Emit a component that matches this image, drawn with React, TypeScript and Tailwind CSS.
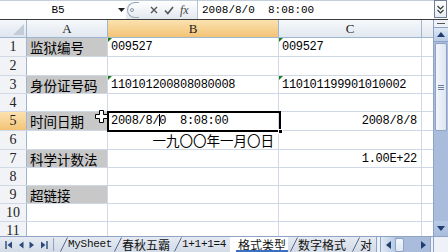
import React from "react";

const CJK = '"Noto Sans CJK SC", sans-serif';
const MONO = '"Liberation Mono", monospace';
const SERIF = '"Liberation Serif", serif';

type Row = {
  h: number;
  a?: string;
  b?: string;
  c?: string;
  bTri?: boolean;
  cTri?: boolean;
  bRight?: boolean;
  cRight?: boolean;
  bCjk?: boolean;
  caret?: boolean;
};

const rows: Row[] = [
  { h: 19, a: "监狱编号", b: "009527", bTri: true, c: "009527", cTri: true },
  { h: 19 },
  { h: 18, a: "身份证号码", b: "110101200808080008", bTri: true, c: "110101199901010002", cTri: true },
  { h: 18 },
  { h: 19, a: "时间日期", b: "2008/8/0  8:08:00", caret: true, c: "2008/8/8", cRight: true },
  { h: 19, b: "一九〇〇年一月〇日", bRight: true, bCjk: true },
  { h: 18, a: "科学计数法", c: "1.00E+22", cRight: true },
  { h: 18 },
  { h: 18, a: "超链接" },
  { h: 18 },
  { h: 14 },
];

function Tri() {
  return (
    <div className="absolute left-0 top-0 w-0 h-0 border-t-[4px] border-t-[#1e7a1e] border-r-[4px] border-r-transparent" />
  );
}

function Cell({
  w,
  text,
  tri,
  right,
  cjk,
  caret,
}: {
  w: number;
  text?: string;
  tri?: boolean;
  right?: boolean;
  cjk?: boolean;
  caret?: boolean;
}) {
  return (
    <div
      className={
        "relative h-full shrink-0 border-r border-[#d0d7e5] flex items-center whitespace-pre " +
        (right ? "justify-end pr-[4px] " : "pl-[3px] ")
      }
      style={{ width: w }}
    >
      {tri && <Tri />}
      {text && (
        <span
          className={cjk ? "text-[13.5px] text-black leading-[16px]" : "text-[12px] tracking-[-0.3px] text-black leading-[14px]"}
          style={{ fontFamily: cjk ? CJK : MONO }}
        >
          {caret ? (
            <>
              {"2008/8/"}
              <span className="inline-block w-px h-[12px] bg-black align-middle -mr-px relative -top-[1px]" />
              {"0  8:08:00"}
            </>
          ) : (
            text
          )}
        </span>
      )}
    </div>
  );
}

function ACell({ text }: { text?: string }) {
  return (
    <div
      className={
        "h-full w-[81px] shrink-0 border-r border-[#d0d7e5] flex items-center pl-[3px] whitespace-nowrap " +
        (text ? "bg-[#c8c8c8]" : "")
      }
    >
      {text && (
        <span className="text-[13.5px] leading-[16px] text-black" style={{ fontFamily: CJK }}>
          {text}
        </span>
      )}
    </div>
  );
}

export default function App() {
  return (
    <div className="w-[448px] h-[252px] overflow-hidden bg-white flex flex-col relative select-none">
      {/* Formula bar */}
      <div className="h-[20px] flex border-b border-[#3a3a3a] shrink-0 bg-white">
        <div className="w-[116px] h-full flex items-center justify-center border-t border-[#c5cedb]">
          <span className="text-[11px] text-black leading-none" style={{ fontFamily: MONO }}>
            B5
          </span>
        </div>
        <div className="w-[10px] h-full flex items-center justify-center border-t border-[#c5cedb]">
          <svg width="7" height="4" viewBox="0 0 7 4">
            <path d="M0 0 L7 0 L3.5 4 Z" fill="#222" />
          </svg>
        </div>
        <div className="w-[71px] h-full flex items-center bg-gradient-to-b from-[#ffffff] to-[#e3e8ef] border-t border-[#c5cedb]">
          <div className="ml-[1px] w-[12px] h-[16px] rounded-l-full border-l border-t border-b border-[#9aa8bb] flex items-center pl-[2px]">
            <div className="w-[4px] h-[4px] rounded-full border border-[#8a96a8]" />
          </div>
          <div className="ml-[10px] w-[9px] flex items-center justify-center">
            <svg width="8" height="8" viewBox="0 0 8 8">
              <path d="M1 1 L7 7 M7 1 L1 7" stroke="#555" strokeWidth="1.4" />
            </svg>
          </div>
          <div className="ml-[6px] w-[10px] flex items-center justify-center">
            <svg width="10" height="9" viewBox="0 0 10 9">
              <path d="M1 4.5 L3.8 7.5 L9 1" stroke="#555" strokeWidth="1.6" fill="none" />
            </svg>
          </div>
          <span
            className="ml-[6px] text-[12px] italic text-[#444] leading-none"
            style={{ fontFamily: SERIF }}
          >
            fx
          </span>
        </div>
        <div className="w-px h-full bg-[#b8c3d2]" />
        <div className="flex-1 h-full flex items-center pl-[4px] border-t border-[#c5cedb] whitespace-pre">
          <span className="text-[11px] text-black leading-none" style={{ fontFamily: MONO }}>
            {"2008/8/0  8:08:00"}
          </span>
        </div>
        <div className="w-[13px] h-[18px] mr-[1px] border border-[#6f7f96] bg-gradient-to-b from-white to-[#e5eaf2] flex items-center justify-center">
          <svg width="7" height="9" viewBox="0 0 7 9">
            <path d="M0.5 1 L3.5 4 L6.5 1 M0.5 5 L3.5 8 L6.5 5" stroke="#333" strokeWidth="1.1" fill="none" />
          </svg>
        </div>
      </div>

      {/* Sheet area */}
      <div className="flex h-[216px] shrink-0">
        <div className="w-[433px] h-full flex flex-col">
          {/* Column header */}
          <div className="h-[18px] flex shrink-0 border-b border-[#9eb6ce]">
            <div className="w-[27px] h-full border-r border-[#9eb6ce] bg-gradient-to-b from-[#f4f7fb] to-[#dfe6ef] relative">
              <div className="absolute right-[2px] bottom-[2px] w-0 h-0 border-b-[11px] border-b-[#c2ccd9] border-l-[11px] border-l-transparent" />
            </div>
            <div className="w-[81px] h-full border-r border-[#9eb6ce] bg-gradient-to-b from-[#f6f8fb] to-[#e2e8f0] flex items-center justify-center">
              <span className="text-[13px] leading-none text-[#222]" style={{ fontFamily: SERIF }}>A</span>
            </div>
            <div className="w-[171px] h-full border-r border-[#9eb6ce] bg-gradient-to-b from-[#fbe2b0] to-[#f3c375] flex items-center justify-center">
              <span className="text-[13px] leading-none text-[#222]" style={{ fontFamily: SERIF }}>B</span>
            </div>
            <div className="w-[143px] h-full border-r border-[#9eb6ce] bg-gradient-to-b from-[#f6f8fb] to-[#e2e8f0] flex items-center justify-center">
              <span className="text-[13px] leading-none text-[#222]" style={{ fontFamily: SERIF }}>C</span>
            </div>
            <div className="flex-1 h-full bg-gradient-to-b from-[#f6f8fb] to-[#e2e8f0]" />
          </div>

          {rows.map((r, i) => (
            <div
              key={i}
              className={"flex shrink-0 " + (i < 10 ? "border-b border-[#d0d7e5]" : "")}
              style={{ height: r.h }}
            >
              <div
                className={
                  "w-[27px] h-full shrink-0 border-r border-[#9eb6ce] flex justify-center " +
                  (i < 10 ? "items-center " : "items-start pt-[2px] ") +
                  (i === 4 ? "bg-gradient-to-b from-[#fbe2b0] to-[#f3c375]" : "bg-[#f1f3f6]")
                }
              >
                <span className="text-[14px] leading-[14px] text-[#222]" style={{ fontFamily: SERIF }}>
                  {String(i + 1)}
                </span>
              </div>
              <ACell text={r.a} />
              <Cell w={171} text={r.b} tri={r.bTri} right={r.bRight} cjk={r.bCjk} caret={r.caret} />
              <Cell w={143} text={r.c} tri={r.cTri} right={r.cRight} />
              <div className="flex-1 h-full" />
            </div>
          ))}
        </div>

        {/* Vertical scrollbar */}
        <div className="w-[15px] h-full flex flex-col bg-[#a9bcdb] border-l border-[#8fa3c4]">
          <div className="h-[8px] bg-[#eef2f8] border-b border-[#8fa3c4] flex items-center justify-center">
            <div className="w-[8px] h-px bg-[#555]" />
          </div>
          <div className="h-[14px] bg-gradient-to-b from-[#dfe8f5] to-[#b8cae6] border-b border-[#8fa3c4] flex items-center justify-center">
            <svg width="8" height="5" viewBox="0 0 8 5">
              <path d="M0 5 L4 0 L8 5 Z" fill="#1f3d6e" />
            </svg>
          </div>
          <div className="h-[88px] mx-[1px] mt-[1px] bg-gradient-to-r from-[#f3f6fb] to-[#dde6f3] border border-[#8fa3c4] rounded-[2px] flex items-center justify-center">
            <div className="flex flex-col gap-[1px]">
              <div className="w-[6px] h-px bg-[#6d7f9c]" />
              <div className="w-[6px] h-px bg-[#6d7f9c]" />
              <div className="w-[6px] h-px bg-[#6d7f9c]" />
            </div>
          </div>
          <div className="flex-1" />
          <div className="h-[15px] bg-gradient-to-b from-[#b8cae6] to-[#a9bcdb] flex items-center justify-center">
            <svg width="8" height="5" viewBox="0 0 8 5">
              <path d="M0 0 L8 0 L4 5 Z" fill="#1f3d6e" />
            </svg>
          </div>
        </div>
      </div>

      {/* Tab bar */}
      <div className="h-[16px] shrink-0 flex items-stretch bg-gradient-to-b from-[#e6ebf2] to-[#d3dbe7] border-t border-[#8fa3c4]">
        <div className="w-[53px] flex items-center justify-around px-[2px] text-[#2a4a7a]">
          <svg width="8" height="8" viewBox="0 0 8 8">
            <path d="M1 0 V8" stroke="#2a4a7a" strokeWidth="1.4" />
            <path d="M7 0.5 L2.5 4 L7 7.5 Z" fill="#2a4a7a" />
          </svg>
          <svg width="6" height="8" viewBox="0 0 6 8">
            <path d="M5.5 0.5 L1 4 L5.5 7.5 Z" fill="#2a4a7a" />
          </svg>
          <svg width="6" height="8" viewBox="0 0 6 8">
            <path d="M0.5 0.5 L5 4 L0.5 7.5 Z" fill="#2a4a7a" />
          </svg>
          <svg width="8" height="8" viewBox="0 0 8 8">
            <path d="M7 0 V8" stroke="#2a4a7a" strokeWidth="1.4" />
            <path d="M1 0.5 L5.5 4 L1 7.5 Z" fill="#2a4a7a" />
          </svg>
        </div>
        <div className="w-px bg-[#8fa3c4] my-[1px]" />
        <div className="flex-1 flex items-stretch overflow-hidden pl-[6px] whitespace-nowrap">
          <Tab label="MySheet" mono w={54} />
          <Tab label="春秋五霸" w={60} />
          <Tab label="1+1+1=4" mono w={56} />
          <Tab label="格式类型" w={60} active />
          <Tab label="数字格式" w={62} />
          <Tab label="对" w={20} />
        </div>
        {/* horizontal scrollbar */}
        <div className="w-[58px] flex items-center bg-[#a9bcdb] border-l border-[#8fa3c4]">
          <div className="w-[4px] h-full bg-[#eef2f8] border-r border-[#8fa3c4]" />
          <div className="w-[14px] h-full flex items-center justify-center bg-gradient-to-r from-[#dfe8f5] to-[#b8cae6]">
            <svg width="5" height="8" viewBox="0 0 5 8">
              <path d="M5 0 L0 4 L5 8 Z" fill="#1f3d6e" />
            </svg>
          </div>
          <div className="w-[9px] h-[14px] bg-gradient-to-b from-[#f3f6fb] to-[#dde6f3] border border-[#8fa3c4] rounded-[2px]" />
          <div className="flex-1" />
          <div className="w-[14px] h-full flex items-center justify-center">
            <svg width="5" height="8" viewBox="0 0 5 8">
              <path d="M0 0 L5 4 L0 8 Z" fill="#1f3d6e" />
            </svg>
          </div>
          <div className="w-[4px] h-full bg-[#eef2f8] border-x border-[#8fa3c4]" />
        </div>
        <div className="w-[14px] bg-[#eef2f8]" />
      </div>

      {/* Selection border on B5 */}
      <div className="absolute left-[107px] top-[111px] w-[174px] h-[21px] border-2 border-black pointer-events-none">
        <div className="absolute -right-[4px] -bottom-[4px] w-[5px] h-[5px] bg-black border border-white" />
      </div>

      {/* Fat cross cursor */}
      <svg className="absolute left-[95px] top-[110px]" width="13" height="13" viewBox="0 0 13 13">
        <path
          d="M4.5 0.5 H8.5 V4.5 H12.5 V8.5 H8.5 V12.5 H4.5 V8.5 H0.5 V4.5 H4.5 Z"
          fill="white"
          stroke="black"
          strokeWidth="1"
        />
      </svg>
    </div>
  );
}

function Tab({ label, mono, w, active }: { label: string; mono?: boolean; w: number; active?: boolean }) {
  return (
    <div className="relative flex items-center shrink-0" style={{ width: w }}>
      <svg className="absolute left-0 top-0" width="8" height="15" viewBox="0 0 8 15">
        <path d="M0.5 14.5 L7.5 0.5" stroke="#55698a" strokeWidth="1" />
      </svg>
      <div className={"relative h-full flex items-center pl-[8px] pr-[2px] " + (active ? "bg-white" : "")}>
        <span
          className={mono ? "text-[11px] tracking-[-0.3px] text-[#111] leading-none" : "text-[12px] text-[#111] leading-[13px]"}
          style={{ fontFamily: mono ? MONO : CJK }}
        >
          {label}
        </span>
        {active && <div className="absolute left-[6px] right-0 bottom-0 h-[2px] bg-[#3a6fc4]" />}
      </div>
    </div>
  );
}
